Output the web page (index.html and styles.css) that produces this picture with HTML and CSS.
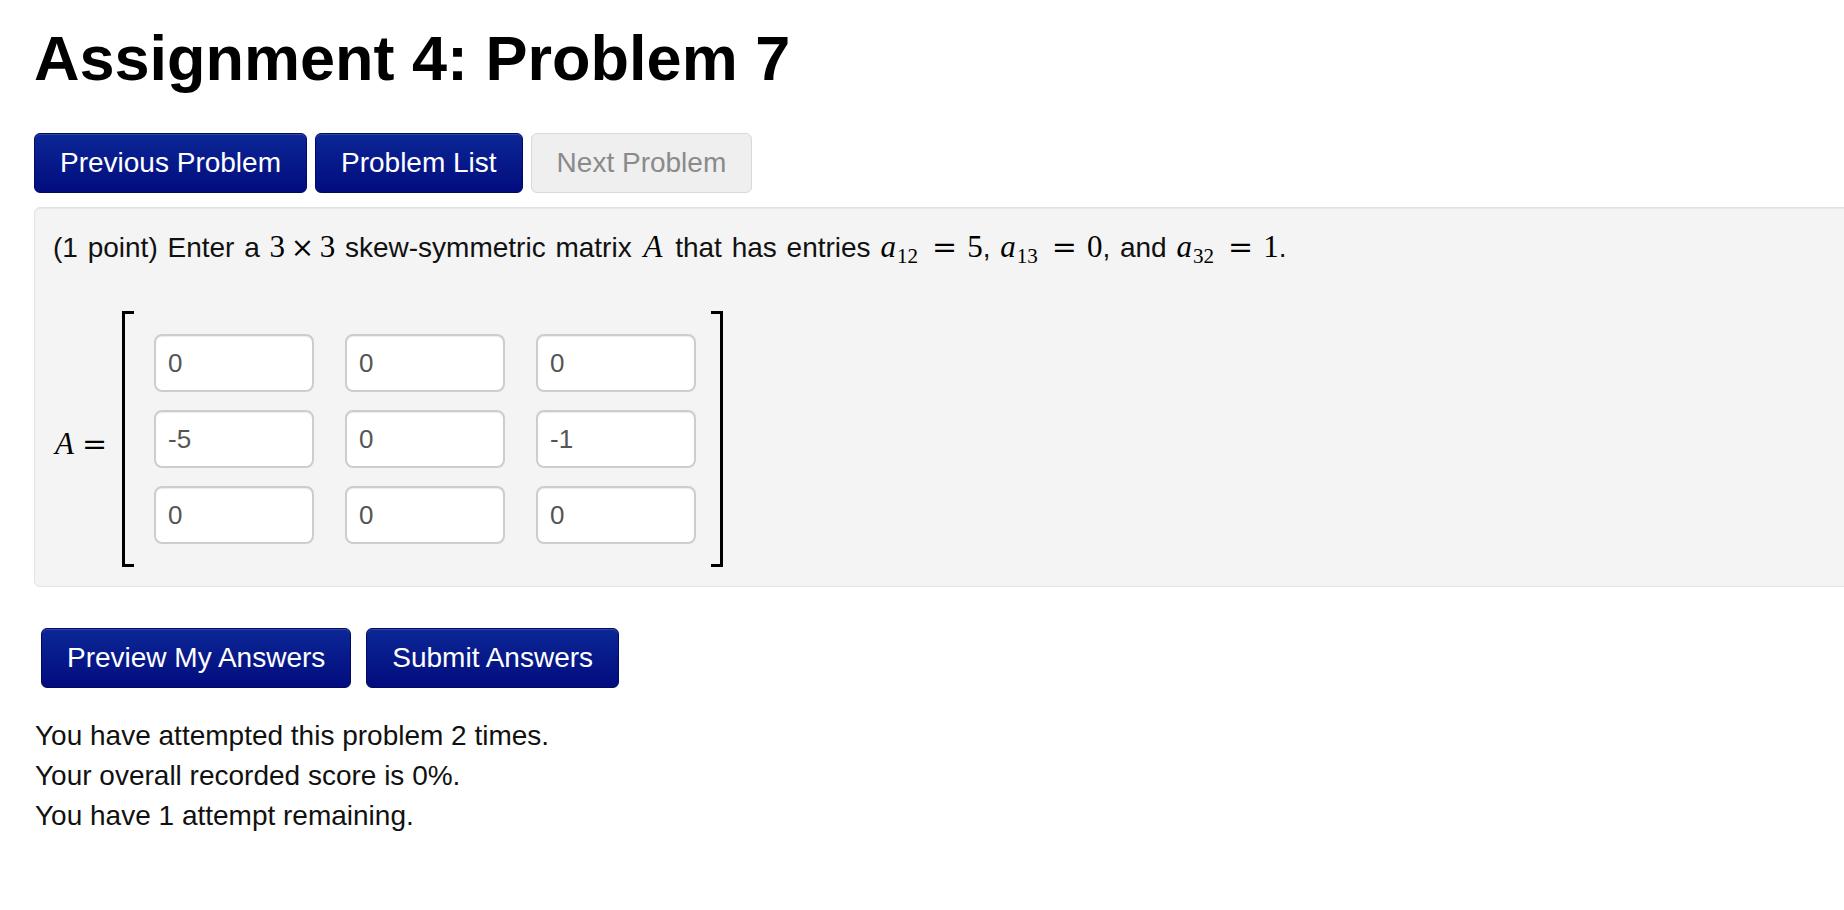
FILE: index.html
```html
<!DOCTYPE html>
<html lang="en">
<head>
<meta charset="utf-8">
<title>Assignment 4: Problem 7</title>
<link rel="stylesheet" href="styles.css">
</head>
<body>
<div class="page">
  <h1 class="title">Assignment 4: Problem 7</h1>

  <div class="nav">
    <a class="btn btn-primary" href="#">Previous Problem</a>
    <a class="btn btn-primary" href="#">Problem List</a>
    <span class="btn btn-disabled">Next Problem</span>
  </div>

  <div class="well">
    <p class="prompt">(1 point) Enter a <span class="math"><span class="mn">3</span><span class="mo bin">×</span><span class="mn">3</span></span> skew-symmetric matrix <span class="math"><span class="mi var">A</span></span> that has entries <span class="math"><span class="mi">a</span><span class="sub">12</span><span class="mo rel">=</span><span class="mn">5</span></span>, <span class="math"><span class="mi">a</span><span class="sub">13</span><span class="mo rel">=</span><span class="mn">0</span></span>, and <span class="math"><span class="mi">a</span><span class="sub">32</span><span class="mo rel">=</span><span class="mn">1</span></span>.</p>

    <div class="display">
      <span class="math lhs"><span class="mi">A</span><span class="mo rel">=</span></span>
      <div class="matrix">
        <span class="bracket bracket-left"></span>
        <div class="cells">
          <input class="cell" type="text" value="0">
          <input class="cell" type="text" value="0">
          <input class="cell" type="text" value="0">
          <input class="cell" type="text" value="-5">
          <input class="cell" type="text" value="0">
          <input class="cell" type="text" value="-1">
          <input class="cell" type="text" value="0">
          <input class="cell" type="text" value="0">
          <input class="cell" type="text" value="0">
        </div>
        <span class="bracket bracket-right"></span>
      </div>
    </div>
  </div>

  <div class="actions">
    <button class="btn btn-primary" type="button">Preview My Answers</button>
    <button class="btn btn-primary" type="button">Submit Answers</button>
  </div>

  <div class="status">
    <div>You have attempted this problem 2 times.</div>
    <div>Your overall recorded score is 0%.</div>
    <div>You have 1 attempt remaining.</div>
  </div>
</div>
</body>
</html>
```

FILE: styles.css
```css
html, body {
  margin: 0;
  padding: 0;
  overflow: hidden;
  background: #ffffff;
}

body {
  font-family: "Liberation Sans", Arial, Helvetica, sans-serif;
  font-size: 28px;
  line-height: 40px;
  color: #111111;
}

.page {
  padding: 26px 0 0 34px;
}

.title {
  margin: 0;
  font-size: 63px;
  line-height: 64px;
  font-weight: bold;
  color: #000000;
}

.nav {
  display: flex;
  gap: 8px;
  margin-top: 43px;
}

.btn {
  box-sizing: border-box;
  height: 60px;
  display: inline-flex;
  align-items: center;
  padding: 0 25px;
  border: 1px solid transparent;
  border-radius: 6px;
  font-family: "Liberation Sans", Arial, Helvetica, sans-serif;
  font-size: 28px;
  line-height: 28px;
  white-space: nowrap;
  text-decoration: none;
  margin: 0;
}

.btn-primary {
  color: #ffffff;
  background: linear-gradient(#0c2796, #020c7e);
  border-color: #03095f;
  box-shadow: inset 0 1px 0 rgba(255, 255, 255, 0.15);
}

.btn-disabled {
  color: #8a8a8a;
  background: #efefef;
  border-color: #d9d9d9;
}

.well {
  margin-top: 14px;
  margin-right: -20px;
  background: #f4f4f4;
  border: 1px solid #e2e2e2;
  border-radius: 6px;
  padding: 19px 18px 19px 18px;
  box-shadow: inset 0 1px 1px rgba(0, 0, 0, 0.05);
}

.prompt {
  margin: 0;
  word-spacing: 2px;
}

.math {
  font-family: "Liberation Serif", "Times New Roman", serif;
  font-size: 31px;
  color: #000000;
  word-spacing: 0;
}

.mi {
  font-style: italic;
}

.mi.var {
  margin: 0 3px 0 2px;
}

.mo.rel {
  font-family: "DejaVu Serif", serif;
  font-size: 30px;
  margin: 0 10px 0 14px;
}

.mo.bin {
  font-family: "DejaVu Serif", serif;
  font-size: 28px;
  margin: 0 0.2em;
}

.sub {
  font-size: 0.68em;
  line-height: 1;
  vertical-align: -0.28em;
  margin-left: 1px;
}

.display {
  display: flex;
  align-items: center;
  margin-top: 43px;
}

.lhs {
  margin: 10px 15px 0 2px;
}

.lhs .mo.rel {
  margin: 0 0 0 8px;
}

.matrix {
  display: flex;
}

.bracket {
  width: 12px;
  box-sizing: border-box;
  border: 3px solid #000000;
}

.bracket-left {
  border-right: 0;
}

.bracket-right {
  border-left: 0;
}

.cells {
  display: grid;
  grid-template-columns: repeat(3, 160px);
  column-gap: 31px;
  row-gap: 18px;
  padding: 23px 15px 23px 20px;
}

.cell {
  box-sizing: border-box;
  width: 160px;
  height: 58px;
  margin: 0;
  padding: 0 12px;
  border: 2px solid #cdcdcd;
  border-radius: 8px;
  background: #ffffff;
  font-family: "Liberation Sans", Arial, Helvetica, sans-serif;
  font-size: 26px;
  color: #555555;
  box-shadow: inset 0 1px 1px rgba(0, 0, 0, 0.075);
  outline: none;
}

.actions {
  display: flex;
  gap: 15px;
  margin: 41px 0 0 7px;
}

.actions .btn {
  cursor: pointer;
}

.status {
  margin-top: 28px;
  padding-left: 1px;
}
```
